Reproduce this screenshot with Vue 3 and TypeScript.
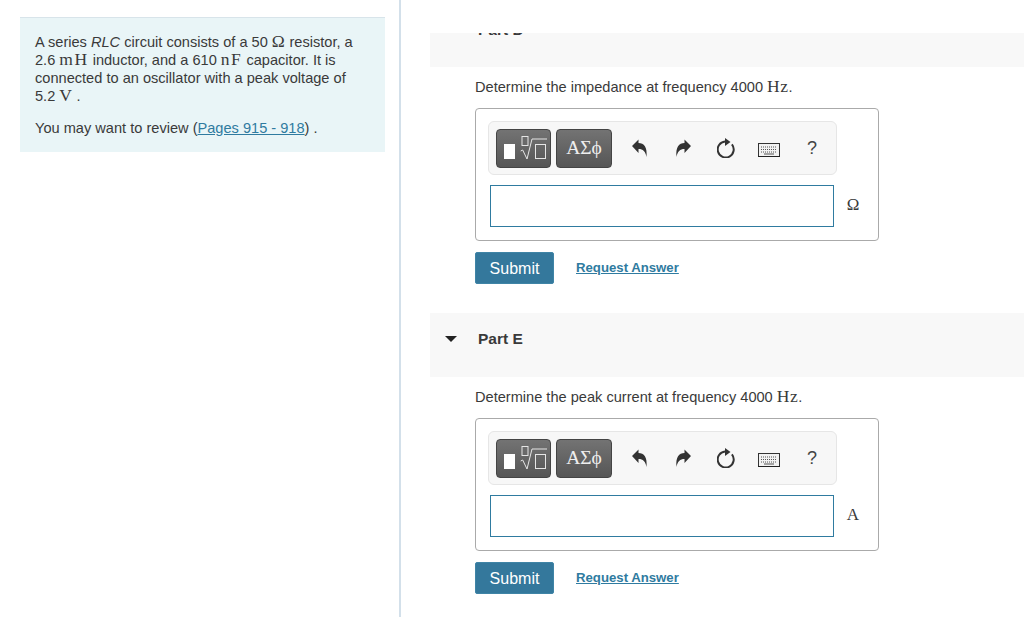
<template>
  <div class="page">
    <aside class="side">
      <div class="intro">
        <p>
          A series <i>RLC</i> circuit consists of a 50 <span class="math omega">Ω</span> resistor, a<br />
          2.6 <span class="math wide">mH</span> inductor, and a 610 <span class="math wide">nF</span> capacitor. It is<br />
          connected to an oscillator with a peak voltage of<br />
          5.2 <span class="math">V</span> .
        </p>
        <p class="review">You may want to review (<a class="pages">Pages 915 - 918</a>) .</p>
      </div>
    </aside>

    <main class="main">
      <section v-for="part in parts" :key="part.name" class="part">
        <header class="band" :class="{ clipped: part.clipped }">
          <span v-if="!part.clipped" class="caret"></span>
          <h2 class="title">{{ part.name }}</h2>
        </header>
        <p class="prompt">{{ part.prompt }} <span class="math">Hz</span>.</p>
        <div class="answer">
          <div class="toolbar">
            <button class="tool">
              <svg width="55" height="39" viewBox="0 0 55 39">
                <rect x="8" y="15" width="11" height="15" fill="#fff" />
                <g fill="none" stroke="#e6e6e6" stroke-width="1">
                  <rect x="26" y="7.500" width="6" height="9" />
                  <rect x="39.500" y="15.500" width="10" height="14" />
                  <path d="M24.700 22l2-1L31 30l5-20h15" />
                </g>
              </svg>
            </button>
            <button class="tool symbols">ΑΣϕ</button>
            <svg class="icon undo" width="16" height="18" viewBox="0 0 16 18">
              <path d="M0 7 6.500 .5v3.500c5.500 0 9 4 8 14-1-5.500-3.500-8-8-8v4z" fill="#333" />
            </svg>
            <svg class="icon redo" width="16" height="18" viewBox="0 0 16 18">
              <path d="M16 7 9.500 .5v3.500c-5.500 0-9 4-8 14 1-5.500 3.500-8 8-8v4z" fill="#333" />
            </svg>
            <svg class="icon reset" width="20" height="20" viewBox="0 0 20 20">
              <path d="M14.900 6.400A8 8 0 1 1 8 3.500" fill="none" stroke="#333" stroke-width="2" />
              <path d="M8 0v8l5.500-4z" fill="#333" />
            </svg>
            <svg class="icon keys" width="22" height="14" viewBox="0 0 22 14">
              <rect x=".5" y=".5" width="21" height="13" fill="#f2f2f2" stroke="#333" />
              <path d="M3 4h16M3 6.500h16M3 9h16" stroke="#555" stroke-width="1.200" stroke-dasharray="1 1" />
              <path d="M6 11h10" stroke="#555" />
              <path d="M0 13.500h22" stroke="#222" />
            </svg>
            <span class="help">?</span>
          </div>
          <div class="entry">
            <div class="input"></div>
            <span class="unit">{{ part.unit }}</span>
          </div>
        </div>
        <div class="actions">
          <button class="submit">Submit</button>
          <a class="request">Request Answer</a>
        </div>
      </section>
    </main>
  </div>
</template>

<script setup lang="ts">
interface Part {
  name: string;
  prompt: string;
  unit: string;
  clipped: boolean;
}

const parts: Part[] = [
  { name: 'Part D', prompt: 'Determine the impedance at frequency 4000', unit: 'Ω', clipped: true },
  { name: 'Part E', prompt: 'Determine the peak current at frequency 4000', unit: 'A', clipped: false },
];
</script>

<style>
html,
body {
  margin: 0;
  background: #fff;
  overflow: hidden;
}
</style>

<style scoped>
* {
  box-sizing: border-box;
}

.page {
  display: flex;
  height: 617px;
  font-family: 'Liberation Sans', Arial, sans-serif;
  font-size: 14.6px;
  color: #3a3a3a;
  overflow: hidden;
}

.side {
  flex: none;
  width: 401px;
  padding: 17px 14px 0 20px;
  border-right: 2px solid #d3e0ea;
}

.intro {
  height: 135px;
  padding: 15px 0 15px 15px;
  background: #e9f5f7;
  border-top: 1px solid #d8e4ea;
  line-height: 18px;
}

.intro p {
  margin: 0;
}

.intro .review {
  margin-top: 14px;
}

.pages {
  color: #2f7ba0;
  text-decoration: underline;
}

.math {
  font-family: 'Liberation Serif', serif;
  font-size: 17.500px;
  line-height: 1;
  letter-spacing: .5px;
}

.wide {
  letter-spacing: 1.500px;
}

.main {
  flex: 1;
  padding: 33px 0 0 29px;
}

.part {
  margin-bottom: 29px;
}

.band {
  display: flex;
  height: 64px;
  padding: 16px 0 0 15px;
  background: #f8f8f8;
}

.band.clipped {
  height: 34px;
  padding-top: 0;
  overflow: hidden;
}

.band.clipped .title {
  margin: -13px 0 0 33px;
}

.caret {
  width: 0;
  height: 0;
  margin-top: 7px;
  border-style: solid;
  border-width: 6px 6.500px 0;
  border-color: #222 transparent transparent;
}

.title {
  margin: 0 0 0 21px;
  font-size: 15.500px;
  line-height: 20px;
  font-weight: 700;
}

.prompt {
  margin: 11px 0 12px 45px;
  line-height: 18px;
}

.answer {
  width: 404px;
  height: 133px;
  margin-left: 45px;
  padding: 12px 0 12px 12px;
  border: 1px solid #aaa;
  border-radius: 4px;
}

.toolbar {
  display: flex;
  align-items: center;
  width: 349px;
  height: 54px;
  padding-left: 7px;
  background: #f7f7f7;
  border: 1px solid #e6e6e6;
  border-radius: 6px;
}

.tool {
  display: block;
  flex: none;
  width: 55px;
  height: 39px;
  padding: 0;
  color: #eee;
  background: linear-gradient(#737373, #565656);
  border: 1px solid #444;
  border-radius: 4px;
}

.tool svg {
  display: block;
  margin: -1px;
}

.symbols {
  width: 56px;
  margin-left: 5px;
  font-family: 'Liberation Serif', serif;
  font-size: 19.500px;
}

.icon {
  flex: none;
}

.undo {
  margin: -1px 0 0 20px;
}

.redo {
  margin: -1px 0 0 27px;
}

.reset {
  margin-left: 26px;
}

.keys {
  margin: 3px 0 0 21px;
}

.help {
  margin-left: 27px;
  font-size: 18px;
  color: #444;
}

.entry {
  display: flex;
  align-items: center;
  margin-top: 10px;
  margin-left: 2px;
}

.input {
  flex: none;
  width: 344px;
  height: 42px;
  background: #fff;
  border: 1px solid #2f7ba0;
}

.unit {
  width: 38px;
  margin-top: -2px;
  text-align: center;
  font-family: 'Liberation Serif', serif;
  font-size: 17px;
}

.actions {
  display: flex;
  align-items: center;
  margin: 11px 0 0 45px;
}

.submit {
  width: 79px;
  height: 32px;
  padding: 1px 0 0;
  font-family: inherit;
  font-size: 16px;
  color: #fff;
  background: #34789c;
  border: 1px solid #3f84a6;
  border-radius: 2px;
}

.request {
  margin: -2px 0 0 22px;
  font-size: 13.200px;
  font-weight: 700;
  color: #2f7ba0;
  text-decoration: underline;
}
</style>
